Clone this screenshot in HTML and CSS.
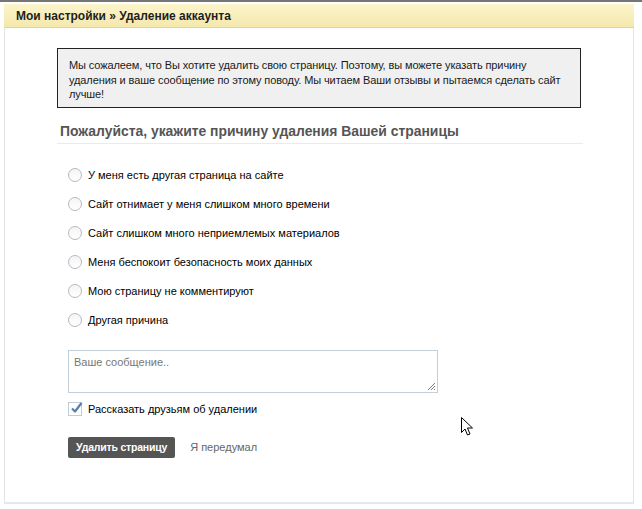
FILE: index.html
```html
<!DOCTYPE html>
<html lang="ru">
<head>
<meta charset="utf-8">
<title>Удаление аккаунта</title>
<link rel="stylesheet" href="styles.css">
</head>
<body>
<div class="topstrip"></div>
<div class="panel">
  <div class="header">Мои настройки » Удаление аккаунта</div>
  <div class="content">
    <div class="notice">Мы сожалеем, что Вы хотите удалить свою страницу. Поэтому, вы можете указать причину удаления и ваше сообщение по этому поводу. Мы читаем Ваши отзывы и пытаемся сделать сайт лучше!</div>
    <h2 class="question">Пожалуйста, укажите причину удаления Вашей страницы</h2>
    <div class="reasons">
      <label class="reason"><span class="radio"></span>У меня есть другая страница на сайте</label>
      <label class="reason"><span class="radio"></span>Сайт отнимает у меня слишком много времени</label>
      <label class="reason"><span class="radio"></span>Сайт слишком много неприемлемых материалов</label>
      <label class="reason"><span class="radio"></span>Меня беспокоит безопасность моих данных</label>
      <label class="reason"><span class="radio"></span>Мою страницу не комментируют</label>
      <label class="reason"><span class="radio"></span>Другая причина</label>
    </div>
    <div class="message">
      <span class="placeholder">Ваше сообщение..</span>
      <svg class="grip" width="9" height="9" viewBox="0 0 9 9"><path d="M8 1L1 8M8 4L4 8M8 7L7 8" stroke="#777" stroke-width="1"/></svg>
    </div>
    <label class="tell">
      <span class="checkbox"><svg width="14" height="14" viewBox="0 0 14 14"><path d="M3 7.5L6 10.5L12.5 2" fill="none" stroke="#5a7ea6" stroke-width="2.2" stroke-linejoin="round"/></svg></span>
      Рассказать друзьям об удалении
    </label>
    <div class="actions">
      <button class="delete">Удалить страницу</button>
      <span class="cancel">Я передумал</span>
    </div>
  </div>
</div>
<svg class="cursor" width="13" height="20" viewBox="0 0 13 20"><path d="M0.5 0.5L0.5 15.5L4 12L6.5 18L9 17L6.5 11L11.5 11Z" fill="#fff" stroke="#000" stroke-width="1" stroke-linejoin="miter"/></svg>
</body>
</html>
```
FILE: styles.css
```css
html, body {
  margin: 0;
  padding: 0;
  background: #fff;
  font-family: "Liberation Sans", Arial, sans-serif;
  font-size: 11px;
  color: #000;
}
.topstrip {
  height: 2px;
  background: #767676;
}
.panel {
  margin: 2px 0 0 4px;
  width: 630px;
  height: 500px;
  box-sizing: border-box;
  border: 1px solid #e1e5ea;
  border-top: none;
  border-bottom: 2px solid #e3e8ee;
}
.header {
  margin: 0 -1px;
  height: 23px;
  line-height: 24px;
  padding-left: 12px;
  background: linear-gradient(#fcf5cc, #f4e8ad);
  border-bottom: 1px solid #e2d596;
  font-weight: bold;
  font-size: 12px;
  color: #1e1e1e;
}
.content {
  padding-top: 20px;
}
.notice {
  margin-left: 52px;
  width: 524px;
  box-sizing: border-box;
  border: 1px solid #222;
  background: #f0f0f0;
  padding: 9px 11px 5px 11px;
  line-height: 14.5px;
  letter-spacing: -0.1px;
  color: #1a1a1a;
}
.question {
  margin: 15px 0 0 52px;
  width: 523px;
  padding: 0 0 4px 3px;
  border-bottom: 1px solid #e8ecf0;
  font-size: 13.9px;
  line-height: 16px;
  font-weight: bold;
  color: #555;
}
.reasons {
  margin: 17px 0 0 63px;
  display: flex;
  flex-direction: column;
}
.reason {
  height: 29px;
  display: flex;
  align-items: center;
  gap: 6px;
}
.radio {
  width: 12px;
  height: 12px;
  border: 1px solid #b4b9bf;
  border-radius: 50%;
  background: linear-gradient(#f4f4f4, #fff);
}
.message {
  position: relative;
  margin: 15px 0 0 63px;
  width: 370px;
  height: 43px;
  box-sizing: border-box;
  border: 1px solid #c3d0da;
  padding: 5px 0 0 5px;
  color: #777;
}
.grip {
  position: absolute;
  right: 1px;
  bottom: 1px;
}
.tell {
  margin: 8px 0 0 63px;
  display: flex;
  align-items: center;
  gap: 6px;
  height: 16px;
}
.checkbox {
  width: 12px;
  height: 12px;
  border: 1px solid #c3ccd6;
  position: relative;
}
.checkbox svg {
  position: absolute;
  left: 0;
  top: -2px;
}
.actions {
  margin: 20px 0 0 63px;
  display: flex;
  align-items: center;
  gap: 15px;
}
.delete {
  height: 21px;
  padding: 0 8px;
  border: none;
  border-radius: 2px;
  background: #555;
  color: #fff;
  font-family: "Liberation Sans", Arial, sans-serif;
  font-size: 10.5px;
  letter-spacing: -0.2px;
  font-weight: bold;
}
.cancel {
  color: #666;
}
.cursor {
  position: absolute;
  left: 461px;
  top: 417px;
}
```
